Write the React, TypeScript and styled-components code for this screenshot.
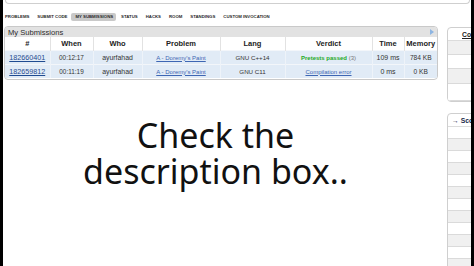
import React from 'react';
import styled, { createGlobalStyle } from 'styled-components';

const GlobalStyle = createGlobalStyle`
  html, body {
    margin: 0;
    padding: 0;
    background: #fff;
  }
  body {
    font-family: "Liberation Sans", Arial, sans-serif;
    color: #222;
  }
  table {
    font-family: inherit;
  }
`;

const Frame = styled.div`
  width: 474px;
  height: 266px;
  box-sizing: border-box;
  border-left: 3px solid #000;
  border-right: 3px solid #000;
  background: #fff;
  overflow: hidden;
  display: flex;
  flex-direction: column;
`;

const TopBox = styled.div`
  height: 3px;
  margin: 0 1px 0 2px;
  border: 1px solid #cfcfcf;
  border-top: none;
  border-radius: 0 0 4px 4px;
  flex-shrink: 0;
`;

const Main = styled.div`
  display: flex;
  align-items: flex-start;
`;

const LeftColumn = styled.div`
  width: 434px;
  margin-left: 1px;
  flex-shrink: 0;
  display: flex;
  flex-direction: column;
`;

const Nav = styled.ul`
  list-style: none;
  margin: 9px 0 0 1px;
  padding: 0;
  display: flex;
  align-items: center;
  gap: 8px;
  height: 8px;
`;

const NavItem = styled.li<{ $active?: boolean }>`
  font-size: 4.3px;
  font-weight: bold;
  color: #2a2a2a;
  line-height: 8px;
  white-space: nowrap;
  ${({ $active }) =>
    $active &&
    `
    background: #c9c9c9;
    border-radius: 2px;
    padding: 0 3px 0 4px;
    margin: 0 -3px 0 -4px;
  `}
`;

const Panel = styled.div`
  margin-top: 5px;
  border: 1px solid #c9c9c9;
  border-radius: 4px;
  overflow: hidden;
  padding-bottom: 1px;
`;

const PanelHeader = styled.div`
  height: 10px;
  background: #e2e2e2;
  display: flex;
  align-items: center;
  justify-content: space-between;
  padding: 0 3px;
  font-size: 7.6px;
  color: #2b2b2b;
`;

const Arrow = styled.span`
  width: 0;
  height: 0;
  border-top: 3px solid transparent;
  border-bottom: 3px solid transparent;
  border-left: 4px solid #8db5e2;
`;

const Table = styled.table`
  width: 432px;
  border-collapse: collapse;
  table-layout: fixed;
`;

const Col = styled.col<{ $w: number }>`
  width: ${({ $w }) => $w}px;
`;

const Th = styled.th`
  height: 13px;
  padding: 0;
  font-size: 7.5px;
  font-weight: bold;
  color: #222;
  background: #fff;
  border-left: 1px solid #e2e2e2;
  text-align: center;
  white-space: nowrap;
  &:first-child {
    border-left: none;
  }
`;

const Row = styled.tr`
  background: #e1ebf6;
  border-top: 1px solid #f3f6fa;
`;

const Td = styled.td<{ $size?: number }>`
  height: 13px;
  padding: 0;
  text-align: center;
  font-size: ${({ $size }) => $size ?? 6.8}px;
  color: #333;
  border-left: 1px solid #eef3f9;
  white-space: nowrap;
  &:first-child {
    border-left: none;
  }
`;

const Link = styled.a<{ $light?: boolean }>`
  color: ${({ $light }) => ($light ? '#3e66b3' : '#1f4b91')};
  text-decoration: underline;
`;

const Passed = styled.span`
  color: #1faa1f;
  font-weight: bold;
`;

const Tests = styled.span`
  color: #777;
`;

const BigText = styled.div`
  margin-top: 37px;
  padding-right: 11px;
  font-family: "Noto Sans", "Open Sans", sans-serif;
  font-size: 34px;
  line-height: 36px;
  color: #111;
  text-align: center;
`;

const Sidebar = styled.div`
  margin-left: 9px;
  margin-top: 23px;
  width: 44px;
  flex-shrink: 0;
  display: flex;
  flex-direction: column;
  gap: 11px;
`;

const SideBox = styled.div`
  border: 1px solid #cfcfcf;
  border-radius: 4px;
  overflow: hidden;
`;

const SideHeader = styled.div<{ $pad: number }>`
  height: 12px;
  display: flex;
  align-items: center;
  padding-left: ${({ $pad }) => $pad}px;
  font-size: 6.8px;
  font-weight: bold;
  color: #1c2a4a;
  white-space: nowrap;
  border-bottom: 1px solid #dcdcdc;
`;

const HeaderLink = styled.span`
  text-decoration: underline;
  color: #222;
`;

const SideRow = styled.div<{ $h: number; $shade: boolean }>`
  height: ${({ $h }) => $h}px;
  background: ${({ $shade }) => ($shade ? '#f0f0f0' : '#fff')};
  border-bottom: 1px solid #dadada;
`;

const columns = [
  { title: '#', w: 45 },
  { title: 'When', w: 43 },
  { title: 'Who', w: 49 },
  { title: 'Problem', w: 78 },
  { title: 'Lang', w: 65 },
  { title: 'Verdict', w: 87 },
  { title: 'Time', w: 32 },
  { title: 'Memory', w: 33 },
];

const submissions = [
  { id: '182660401', when: '00:12:17', lang: 'GNU C++14', passed: true, time: '109 ms', mem: '784 KB' },
  { id: '182659812', when: '00:11:19', lang: 'GNU C11', passed: false, time: '0 ms', mem: '0 KB' },
];

const navItems = [
  'PROBLEMS',
  'SUBMIT CODE',
  'MY SUBMISSIONS',
  'STATUS',
  'HACKS',
  'ROOM',
  'STANDINGS',
  'CUSTOM INVOCATION',
];

const App: React.FC = () => {
  return (
    <>
      <GlobalStyle />
      <Frame>
        <TopBox />
        <Main>
          <LeftColumn>
            <Nav>
              {navItems.map((item) => (
                <NavItem key={item} $active={item === 'MY SUBMISSIONS'}>
                  {item}
                </NavItem>
              ))}
            </Nav>
            <Panel>
              <PanelHeader>
                <span>My Submissions</span>
                <Arrow />
              </PanelHeader>
              <Table>
                <colgroup>
                  {columns.map((c) => (
                    <Col key={c.title} $w={c.w} />
                  ))}
                </colgroup>
                <thead>
                  <tr>
                    {columns.map((c) => (
                      <Th key={c.title}>{c.title}</Th>
                    ))}
                  </tr>
                </thead>
                <tbody>
                  {submissions.map((s) => (
                    <Row key={s.id}>
                      <Td $size={7.2}>
                        <Link>{s.id}</Link>
                      </Td>
                      <Td $size={6.4}>{s.when}</Td>
                      <Td $size={6.9}>ayurfahad</Td>
                      <Td $size={6}>
                        <Link $light>A - Doremy's Paint</Link>
                      </Td>
                      <Td $size={6.2}>{s.lang}</Td>
                      <Td $size={6}>
                        {s.passed ? (
                          <>
                            <Passed>Pretests passed</Passed> <Tests>(3)</Tests>
                          </>
                        ) : (
                          <Link $light>Compilation error</Link>
                        )}
                      </Td>
                      <Td $size={7}>{s.time}</Td>
                      <Td $size={6.6}>{s.mem}</Td>
                    </Row>
                  ))}
                </tbody>
              </Table>
            </Panel>
            <BigText>
              Check the
              <br />
              description box..
            </BigText>
          </LeftColumn>
          <Sidebar>
            <SideBox>
              <SideHeader $pad={14}>
                <HeaderLink>Contest</HeaderLink>
              </SideHeader>
              <SideRow $h={13} $shade />
              <SideRow $h={13} $shade={false} />
              <SideRow $h={14} $shade />
              <SideRow $h={16} $shade={false} />
            </SideBox>
            <SideBox>
              <SideHeader $pad={4}>→ Score table</SideHeader>
              {Array.from({ length: 12 }).map((_, i) => (
                <SideRow key={i} $h={11} $shade={i % 2 === 1} />
              ))}
            </SideBox>
          </Sidebar>
        </Main>
      </Frame>
    </>
  );
};

export default App;
